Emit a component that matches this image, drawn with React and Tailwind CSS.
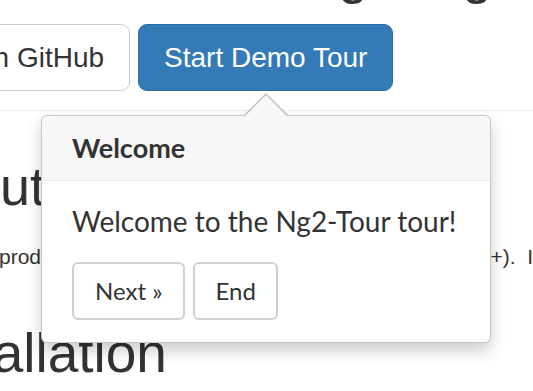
import React from 'react'

// Bootstrap-like demo page, seen at 150% zoom and scrolled sideways
function TourPopover() {
  return (
    <div className="absolute left-[41px] top-[115px] w-[450px] h-[228px] rounded-[6px] border border-[rgba(0,0,0,0.22)] bg-white shadow-[0_8px_16px_rgba(0,0,0,0.2)] font-['Lato','Noto_Sans',sans-serif] text-[#333]">
      {/* arrow pointing up at the Start button */}
      <div className="absolute left-[202px] top-[-23px] w-0 h-0 border-x-[22px] border-x-transparent border-b-[22px] border-b-[rgba(0,0,0,0.25)]" />
      <div className="absolute left-[203px] top-[-21px] w-0 h-0 border-x-[21px] border-x-transparent border-b-[21px] border-b-[#f7f7f7]" />

      <div className="h-[65px] flex items-center px-[30px] bg-[#f7f7f7] border-b border-[#ebebeb] rounded-t-[6px] text-[27px] font-bold">
        Welcome
      </div>
      <div className="px-[30px] pt-[21px] pb-[21px]">
        <p className="text-[28px] leading-[38px] whitespace-nowrap">Welcome to the Ng2-Tour tour!</p>
        <div className="flex gap-[8px] mt-[22px]">
          <button className="h-[58px] px-[21px] rounded-[6px] border-2 border-[#d0d0d0] bg-white text-[24px]">
            Next »
          </button>
          <button className="h-[58px] px-[20px] rounded-[6px] border-2 border-[#d0d0d0] bg-white text-[24px]">
            End
          </button>
        </div>
      </div>
    </div>
  )
}

export default function App() {
  return (
    <div className="relative w-[533px] h-[391px] overflow-hidden bg-white text-[#333] font-['Liberation_Sans',Arial,sans-serif]">
      <div className="-ml-[96px] w-[900px]">
        {/* page title, only descenders visible */}
        <h1 className="flex h-[59px] -mt-[55px] text-[54px] leading-[59px]">
          <span className="ml-[434px]">g</span>
          <span className="ml-[94px]">g</span>
        </h1>

        <div className="flex gap-[8px] pt-[20px] pb-[19px] border-b border-[#eee]">
          <button className="-ml-[20px] px-[25px] py-[15px] leading-[35px] text-[28px] rounded-[9px] border border-[#ccc] bg-white text-[#333]">
            View on GitHub
          </button>
          <button className="px-[25px] py-[15px] leading-[35px] text-[28px] rounded-[9px] border border-[#2e6da4] bg-[#337ab7] text-white">
            Start Demo Tour
          </button>
        </div>

        <h2 className="mt-[46px] text-[54px] leading-[59px]">About</h2>
        <p className="mt-[26px] ml-[11px] text-[21px] leading-[30px] whitespace-nowrap">
          This is a product tour library that is built for Angular (Angular 2+).{'\u00a0 '}It's inspired by angular-ui-tour.
        </p>
        <h2 className="mt-[52px] text-[55px] leading-[59px]">Installation</h2>
      </div>

      <TourPopover />
    </div>
  )
}
